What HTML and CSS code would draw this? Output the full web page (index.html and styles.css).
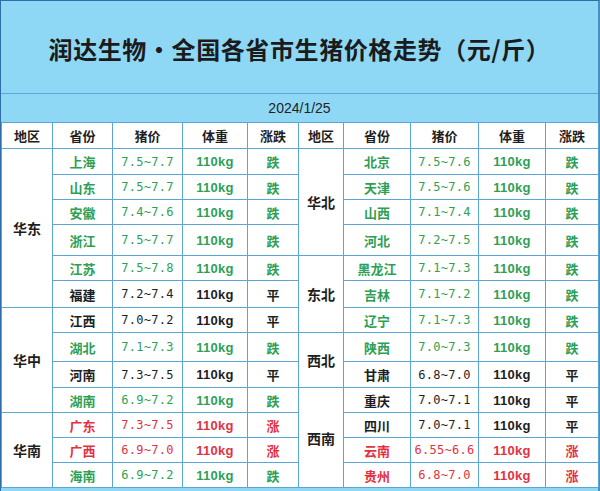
FILE: index.html
```html
<!DOCTYPE html>
<html lang="zh">
<head>
<meta charset="utf-8">
<link rel="stylesheet" href="styles.css">
</head>
<body>
<div class="frame">
  <div class="title">润达生物·全国各省市生猪价格走势（元/斤）</div>
  <div class="date">2024/1/25</div>
  <table class="grid">
    <colgroup>
      <col class="c-reg"><col class="c-prov"><col class="c-price"><col class="c-wt"><col class="c-chg">
      <col class="c-reg2"><col class="c-prov2"><col class="c-price2"><col class="c-wt2"><col class="c-chg2">
    </colgroup>
    <thead>
      <tr class="head">
        <th>地区</th><th>省份</th><th>猪价</th><th>体重</th><th>涨跌</th>
        <th>地区</th><th>省份</th><th>猪价</th><th>体重</th><th>涨跌</th>
      </tr>
    </thead>
    <tbody>
      <tr class="r1">
        <td class="reg" rowspan="6">华东</td>
        <td class="g prov">上海</td><td class="g price">7.5~7.7</td><td class="g wt">110kg</td><td class="g chg">跌</td>
        <td class="reg" rowspan="4">华北</td>
        <td class="g prov">北京</td><td class="g price">7.5~7.6</td><td class="g wt">110kg</td><td class="g chg">跌</td>
      </tr>
      <tr class="r2">
        <td class="g prov">山东</td><td class="g price">7.5~7.7</td><td class="g wt">110kg</td><td class="g chg">跌</td>
        <td class="g prov">天津</td><td class="g price">7.5~7.6</td><td class="g wt">110kg</td><td class="g chg">跌</td>
      </tr>
      <tr class="r3">
        <td class="g prov">安徽</td><td class="g price">7.4~7.6</td><td class="g wt">110kg</td><td class="g chg">跌</td>
        <td class="g prov">山西</td><td class="g price">7.1~7.4</td><td class="g wt">110kg</td><td class="g chg">跌</td>
      </tr>
      <tr class="r4">
        <td class="g prov">浙江</td><td class="g price">7.5~7.7</td><td class="g wt">110kg</td><td class="g chg">跌</td>
        <td class="g prov">河北</td><td class="g price">7.2~7.5</td><td class="g wt">110kg</td><td class="g chg">跌</td>
      </tr>
      <tr class="r5">
        <td class="g prov">江苏</td><td class="g price">7.5~7.8</td><td class="g wt">110kg</td><td class="g chg">跌</td>
        <td class="reg" rowspan="3">东北</td>
        <td class="g prov">黑龙江</td><td class="g price">7.1~7.3</td><td class="g wt">110kg</td><td class="g chg">跌</td>
      </tr>
      <tr class="r6">
        <td class="k prov">福建</td><td class="k price">7.2~7.4</td><td class="k wt">110kg</td><td class="k chg">平</td>
        <td class="g prov">吉林</td><td class="g price">7.1~7.2</td><td class="g wt">110kg</td><td class="g chg">跌</td>
      </tr>
      <tr class="r7">
        <td class="reg" rowspan="4">华中</td>
        <td class="k prov">江西</td><td class="k price">7.0~7.2</td><td class="k wt">110kg</td><td class="k chg">平</td>
        <td class="g prov">辽宁</td><td class="g price">7.1~7.3</td><td class="g wt">110kg</td><td class="g chg">跌</td>
      </tr>
      <tr class="r8">
        <td class="g prov">湖北</td><td class="g price">7.1~7.3</td><td class="g wt">110kg</td><td class="g chg">跌</td>
        <td class="reg" rowspan="2">西北</td>
        <td class="g prov">陕西</td><td class="g price">7.0~7.3</td><td class="g wt">110kg</td><td class="g chg">跌</td>
      </tr>
      <tr class="r9">
        <td class="k prov">河南</td><td class="k price">7.3~7.5</td><td class="k wt">110kg</td><td class="k chg">平</td>
        <td class="k prov">甘肃</td><td class="k price">6.8~7.0</td><td class="k wt">110kg</td><td class="k chg">平</td>
      </tr>
      <tr class="r10">
        <td class="g prov">湖南</td><td class="g price">6.9~7.2</td><td class="g wt">110kg</td><td class="g chg">跌</td>
        <td class="reg" rowspan="5">西南</td>
        <td class="k prov">重庆</td><td class="k price">7.0~7.1</td><td class="k wt">110kg</td><td class="k chg">平</td>
      </tr>
      <tr class="r11">
        <td class="reg" rowspan="3">华南</td>
        <td class="r prov">广东</td><td class="r price">7.3~7.5</td><td class="r wt">110kg</td><td class="r chg">涨</td>
        <td class="k prov">四川</td><td class="k price">7.0~7.1</td><td class="k wt">110kg</td><td class="k chg">平</td>
      </tr>
      <tr class="r12">
        <td class="r prov">广西</td><td class="r price">6.9~7.0</td><td class="r wt">110kg</td><td class="r chg">涨</td>
        <td class="r prov">云南</td><td class="r price">6.55~6.6</td><td class="r wt">110kg</td><td class="r chg">涨</td>
      </tr>
      <tr class="r13">
        <td class="g prov">海南</td><td class="g price">6.9~7.2</td><td class="g wt">110kg</td><td class="g chg">跌</td>
        <td class="r prov">贵州</td><td class="r price">6.8~7.0</td><td class="r wt">110kg</td><td class="r chg">涨</td>
      </tr>
    </tbody>
  </table>
</div>
</body>
</html>
```

FILE: styles.css
```css
html, body {
  margin: 0;
  padding: 0;
  background: #8ed8f5;
}
body {
  width: 600px;
  height: 491px;
  overflow: hidden;
  font-family: "Noto Sans CJK SC", "Noto Sans", sans-serif;
}
.frame {
  width: 600px;
  height: 491px;
  box-sizing: border-box;
  background: #8ed8f5;
  border-left: 1px solid #2f6ea6;
  border-right: 2px solid #4a8fc4;
  border-top: 1px solid #2f6ea6;
}
.title {
  height: 93px;
  display: flex;
  align-items: center;
  justify-content: center;
  font-size: 24px;
  font-weight: bold;
  color: #1b1b1b;
  letter-spacing: 0.6px;
  border-bottom: 1px solid #5aa8d8;
  padding-top: 2px;
  box-sizing: border-box;
}
.date {
  height: 28px;
  display: flex;
  align-items: center;
  justify-content: center;
  font-family: "Liberation Sans", "Noto Sans", sans-serif;
  font-size: 14px;
  color: #222;
}
.grid {
  width: 597px;
  border-collapse: collapse;
  table-layout: fixed;
  background: #ffffff;
}
.grid th, .grid td {
  border: 1px solid #5aa6d6;
  padding: 0;
  text-align: center;
  vertical-align: middle;
  overflow: hidden;
  white-space: nowrap;
}
.c-reg { width: 51px; }
.c-prov { width: 60px; }
.c-price { width: 70px; }
.c-wt { width: 65px; }
.c-chg { width: 51px; }
.c-reg2 { width: 45px; }
.c-prov2 { width: 67px; }
.c-price2 { width: 68px; }
.c-wt2 { width: 67px; }
.c-chg2 { width: 53px; }
.head { height: 26px; }
.head th {
  font-size: 13px;
  font-weight: bold;
  color: #1e1e1e;
}
.reg {
  font-size: 14px;
  font-weight: bold;
  color: #1e1e1e;
}
.prov, .chg {
  font-size: 13px;
  font-weight: bold;
}
.price {
  font-family: "DejaVu Sans Mono", "Liberation Mono", monospace;
  font-size: 12px;
  letter-spacing: 0.3px;
}
.wt {
  font-family: "Liberation Sans", "Noto Sans", sans-serif;
  font-size: 13px;
  font-weight: bold;
  letter-spacing: 0.3px;
}
.g { color: #2e9f55; }
.r { color: #e3323f; }
.k { color: #1e1e1e; }
.r1 { height: 26px; }
.r2 { height: 25px; }
.r3 { height: 25px; }
.r4 { height: 31px; }
.r5 { height: 25px; }
.r6 { height: 27px; }
.r7 { height: 25px; }
.r8 { height: 29px; }
.r9 { height: 26px; }
.r10 { height: 25px; }
.r11 { height: 25px; }
.r12 { height: 25px; }
.r13 { height: 25px; }
```
